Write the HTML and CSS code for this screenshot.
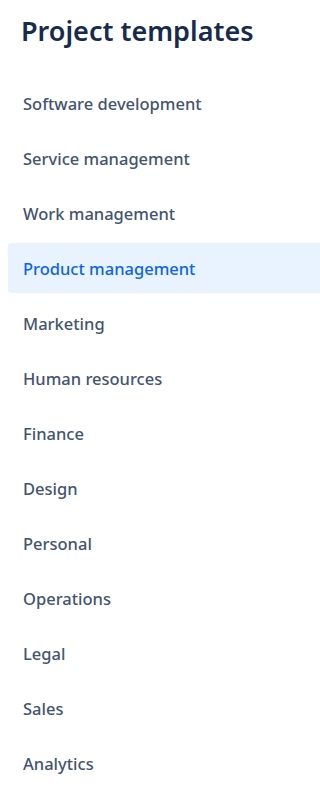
FILE: index.html
```html
<!DOCTYPE html>
<html>
<head>
    <title>Project templates</title>
    <link rel="stylesheet" href="styles.css">
</head>
<body>
    <aside class="sidebar">
        <h1 class="sidebar-title">Project templates</h1>
        <ul class="category-list">
            <li><a href="#">Software development</a></li>
            <li><a href="#">Service management</a></li>
            <li><a href="#">Work management</a></li>
            <li class="active"><a href="#">Product management</a></li>
            <li><a href="#">Marketing</a></li>
            <li><a href="#">Human resources</a></li>
            <li><a href="#">Finance</a></li>
            <li><a href="#">Design</a></li>
            <li><a href="#">Personal</a></li>
            <li><a href="#">Operations</a></li>
            <li><a href="#">Legal</a></li>
            <li><a href="#">Sales</a></li>
            <li><a href="#">Analytics</a></li>
        </ul>
    </aside>
</body>
</html>
```

FILE: styles.css
```css
body {
    margin: 0;
    background-color: #fff;
    font-family: "Noto Sans", "Open Sans", sans-serif;
}
.sidebar {
    padding: 8px 0 0 8px;
}
.sidebar-title {
    margin: 0;
    padding: 0 0 0 13px;
    height: 45px;
    line-height: 45px;
    font-size: 27px;
    font-weight: 600;
    color: #172b4d;
}
.category-list {
    list-style-type: none;
    margin: 25px 0 0 0;
    padding: 0;
    display: flex;
    flex-direction: column;
    gap: 5px;
}
.category-list li a {
    display: flex;
    align-items: center;
    height: 50px;
    padding-left: 15px;
    padding-top: 1px;
    box-sizing: border-box;
    border-radius: 3px 0 0 3px;
    color: #44546f;
    font-size: 16.5px;
    font-weight: 500;
    text-decoration: none;
}
.category-list li.active a {
    background-color: #e9f2ff;
    color: #0c66e4;
}
```
